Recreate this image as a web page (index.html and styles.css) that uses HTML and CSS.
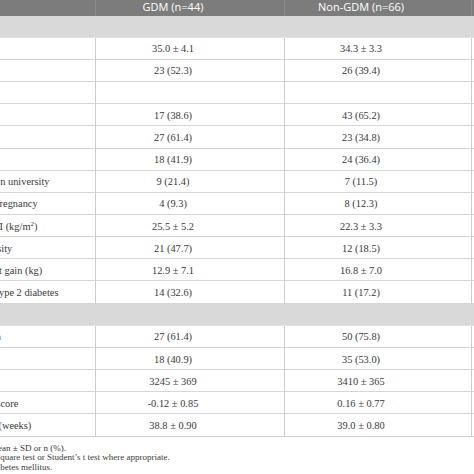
FILE: index.html
```html
<!DOCTYPE html>
<html lang="en">
<head>
<meta charset="utf-8">
<title>GDM characteristics</title>
<link rel="stylesheet" href="styles.css">
</head>
<body>
<div class="clip">
  <div class="sheet">
    <table class="tbl">
      <colgroup>
        <col class="c-label"><col class="c-gdm"><col class="c-non"><col class="c-p">
      </colgroup>
      <thead>
        <tr class="head">
          <th class="lab">Item</th>
          <th class="num">GDM (n=44)</th>
          <th class="num">Non-GDM (n=66)</th>
          <th class="pv">P</th>
        </tr>
      </thead>
      <tbody>
        <tr class="section"><td colspan="4">Maternal characteristics</td></tr>
        <tr><td class="lab">Age (y)</td><td class="num">35.0 ± 4.1</td><td class="num">34.3 ± 3.3</td><td class="pv">0.31</td></tr>
        <tr><td class="lab">Age ≥35</td><td class="num">23 (52.3)</td><td class="num">26 (39.4)</td><td class="pv">0.18</td></tr>
        <tr><td class="lab">Parity</td><td class="num"></td><td class="num"></td><td class="pv"></td></tr>
        <tr><td class="lab">Primipara</td><td class="num">17 (38.6)</td><td class="num">43 (65.2)</td><td class="pv">0.01</td></tr>
        <tr><td class="lab">Multipara</td><td class="num">27 (61.4)</td><td class="num">23 (34.8)</td><td class="pv"></td></tr>
        <tr><td class="lab">College</td><td class="num">18 (41.9)</td><td class="num">24 (36.4)</td><td class="pv">0.56</td></tr>
        <tr><td class="lab">Higher than university</td><td class="num">9 (21.4)</td><td class="num">7 (11.5)</td><td class="pv">0.17</td></tr>
        <tr><td class="lab">Multiple pregnancy</td><td class="num">4 (9.3)</td><td class="num">8 (12.3)</td><td class="pv">0.76</td></tr>
        <tr><td class="lab">Initial BMI (kg/m<sup>2</sup>)</td><td class="num">25.5 ± 5.2</td><td class="num">22.3 ± 3.3</td><td class="pv">&lt;0.01</td></tr>
        <tr><td class="lab">Overt obesity</td><td class="num">21 (47.7)</td><td class="num">12 (18.5)</td><td class="pv">&lt;0.01</td></tr>
        <tr><td class="lab">Net weight gain (kg)</td><td class="num">12.9 ± 7.1</td><td class="num">16.8 ± 7.0</td><td class="pv">&lt;0.01</td></tr>
        <tr><td class="lab">Maternal type 2 diabetes</td><td class="num">14 (32.6)</td><td class="num">11 (17.2)</td><td class="pv">0.06</td></tr>
        <tr class="section"><td colspan="4">Neonatal outcomes</td></tr>
        <tr><td class="lab">Admission</td><td class="num">27 (61.4)</td><td class="num">50 (75.8)</td><td class="pv">0.11</td></tr>
        <tr><td class="lab">Male</td><td class="num">18 (40.9)</td><td class="num">35 (53.0)</td><td class="pv">0.21</td></tr>
        <tr><td class="lab">BW (g)</td><td class="num">3245 ± 369</td><td class="num">3410 ± 365</td><td class="pv">0.02</td></tr>
        <tr><td class="lab">Weight z-score</td><td class="num">-0.12 ± 0.85</td><td class="num">0.16 ± 0.77</td><td class="pv">0.07</td></tr>
        <tr><td class="lab">Gestation (weeks)</td><td class="num">38.8 ± 0.90</td><td class="num">39.0 ± 0.80</td><td class="pv">0.25</td></tr>
      </tbody>
    </table>
    <div class="notes">
      <p>Reported as mean ± SD or n (%).</p>
      <p>Tested by chi-square test or Student’s t test where appropriate.</p>
      <p>Gestational diabetes mellitus.</p>
    </div>
  </div>
</div>
</body>
</html>
```

FILE: styles.css
```css
html, body {
  margin: 0;
  padding: 0;
  background: #ffffff;
}

.clip {
  width: 474px;
  height: 474px;
  overflow: hidden;
}

.sheet {
  margin-left: -54px;
  width: 680px;
}

.tbl {
  margin-left: 4px;
  border-collapse: separate;
  border-spacing: 0;
  table-layout: fixed;
  width: 602px;
  font-family: "Liberation Serif", "Times New Roman", serif;
  font-size: 10.4px;
  color: #3a3a3a;
}

.c-label { width: 146px; }
.c-gdm { width: 189px; }
.c-non { width: 187px; }
.c-p { width: 80px; }

.tbl td, .tbl th {
  padding: 0;
  white-space: nowrap;
  overflow: hidden;
}

.head {
  height: 15.6px;
}

.head th {
  background: #7c7c7c;
  color: #ffffff;
  font-family: "Open Sans", "Liberation Sans", sans-serif;
  font-weight: 400;
  font-size: 11px;
  line-height: 13px;
  padding-bottom: 2px;
  border-right: 1px solid #8c8c8c;
  vertical-align: middle;
}

.tbl tbody tr {
  height: 22.17px;
}

.tbl tbody td {
  border-bottom: 1px solid #d6d6d6;
  border-right: 1px solid #cdcdcd;
  vertical-align: middle;
  padding-top: 1px;
}

.tbl .lab {
  text-align: left;
  padding-left: 6px;
}

.tbl .num {
  text-align: center;
  padding-right: 34px;
}

.tbl .pv {
  text-align: center;
}

.tbl sup {
  font-size: 7px;
  line-height: 0;
  vertical-align: 4px;
}

.tbl tr.section td {
  background: #d9d9d9;
  border-right: none;
  border-bottom: 1px solid #e2e2e2;
  color: #d9d9d9;
  padding-left: 6px;
}

.notes {
  margin-top: 7px;
  font-family: "Liberation Serif", "Times New Roman", serif;
  font-size: 9px;
  color: #3a3a3a;
}

.notes p {
  margin: 0;
  line-height: 9.6px;
  white-space: nowrap;
}
```
